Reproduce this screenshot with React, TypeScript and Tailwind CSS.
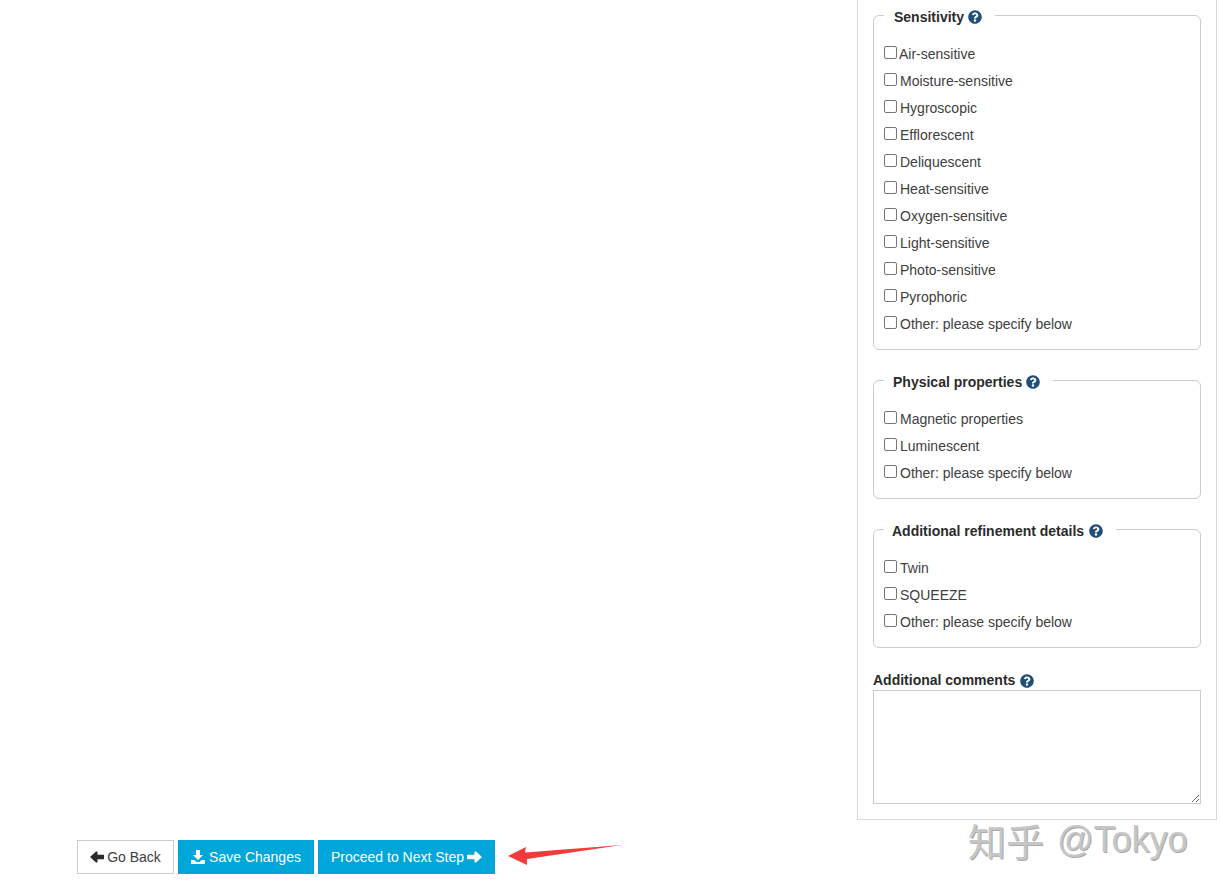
import React from "react";
import { FaQuestionCircle } from "react-icons/fa";

const Check = ({ label, tight }: { label: string; tight?: boolean }) => (
  <label className="flex h-[27px] items-center text-[14px] text-[#404040]">
    <input type="checkbox" className={`relative top-[-2px] m-0 h-[13px] w-[13px] shrink-0 appearance-none rounded-[2px] border border-[#767676] bg-white ${tight ? "mr-[2px]" : "mr-[3px]"}`} />
    <span>{label}</span>
  </label>
);

const Group = ({ title, items, indent, gap }: { title: string; items: string[]; indent: string; gap: string }) => (
  <fieldset className="mb-[20px] rounded-[6px] border border-[#ccc] pb-[11px] pl-[10px] pr-[10px]">
    <legend className={`box-border flex h-[20px] items-center pr-[13px] pt-[4px] text-[14px] font-bold leading-[20px] text-[#2b2b2b] ${indent}`}>
      <span>{title}</span>
      <FaQuestionCircle className={`text-[14px] text-[#1f4e79] ${gap}`} />
    </legend>
    <div className="pt-[16px]">
      {items.map((i, n) => (
        <Check key={n} label={i} tight={i === "Air-sensitive"} />
      ))}
    </div>
  </fieldset>
);

const ArrowLeft = () => (
  <svg width="14" height="12" viewBox="0 0 14 12" fill="currentColor"><path d="M0 6 L6 0.5 L7.5 0.5 L7.5 3.8 L14 3.8 L14 8.2 L7.5 8.2 L7.5 11.5 L6 11.5 Z" /></svg>
);
const ArrowRight = () => (
  <svg width="15" height="12" viewBox="0 0 15 12" fill="currentColor"><path d="M15 6 L9 0.5 L7.5 0.5 L7.5 3.8 L0 3.8 L0 8.2 L7.5 8.2 L7.5 11.5 L9 11.5 Z" /></svg>
);
const Save = () => (
  <svg width="14" height="14" viewBox="0 0 14 14" fill="currentColor"><path d="M5 0 H9 V5 H12 L7 10 L2 5 H5 Z M0 10 H3.5 L5.5 12 H8.5 L10.5 10 H14 V14 H0 Z" /></svg>
);

export default function App() {
  return (
    <div className="relative flex h-[893px] w-[1221px] overflow-hidden bg-white font-['Liberation_Sans',Arial,sans-serif]">
      <div className="flex flex-1 flex-col justify-end pb-[19px] pl-[77px]">
        <div className="flex items-center gap-[4px] text-[14px]">
          <button className="flex h-[34px] w-[97px] items-center justify-center gap-[3px] border border-[#ccc] bg-white text-[#404040]">
            <span className="text-[#2b2b2b]"><ArrowLeft /></span> Go Back
          </button>
          <button className="flex h-[34px] w-[136px] items-center justify-center gap-[4px] bg-[#00a5d9] text-white">
            <Save /> Save Changes
          </button>
          <button className="flex h-[34px] w-[177px] items-center justify-center gap-[3px] bg-[#00a5d9] text-white">
            Proceed to Next Step <ArrowRight />
          </button>
          <svg width="114" height="22" viewBox="0 0 114 22" className="ml-[9px] mt-[-2px]">
            <path d="M0 11 L18 2 L17 7.5 L114 0 L19 14 L19 20 Z" fill="#f23c3c" />
          </svg>
        </div>
      </div>
      <div className="mb-[73px] mr-[4px] w-[360px] border-x border-b border-[#d8d8d8] px-[15px] pt-[5px]">
        <Group
          title="Sensitivity"
          indent="pl-[10px]"
          gap="ml-[4px]"
          items={["Air-sensitive","Moisture-sensitive","Hygroscopic","Efflorescent","Deliquescent","Heat-sensitive","Oxygen-sensitive","Light-sensitive","Photo-sensitive","Pyrophoric","Other: please specify below"]}
        />
        <Group title="Physical properties" indent="pl-[9px]" gap="ml-[4px]" items={["Magnetic properties","Luminescent","Other: please specify below"]} />
        <Group title="Additional refinement details" indent="pl-[8px]" gap="ml-[5px]" items={["Twin","SQUEEZE","Other: please specify below"]} />
        <div className="box-border flex h-[22px] items-center pt-[3px] text-[14px] font-bold text-[#2b2b2b]">
          Additional comments
          <FaQuestionCircle className="ml-[5px] text-[14px] text-[#1f4e79]" />
        </div>
        <textarea className="block h-[114px] w-full border border-[#ccc] bg-white" />
      </div>
      <div className="absolute left-[968px] top-[816px] flex items-center whitespace-nowrap leading-[48px] text-[#c6c6c6] [text-shadow:1px_1px_0_#aaaaaa]">
        <span className="font-['Noto_Sans_CJK_SC',sans-serif] text-[38px]">知乎</span>
        <span className="ml-[13px] font-['Liberation_Sans',sans-serif] text-[36px]">@Tokyo</span>
      </div>
    </div>
  );
}
